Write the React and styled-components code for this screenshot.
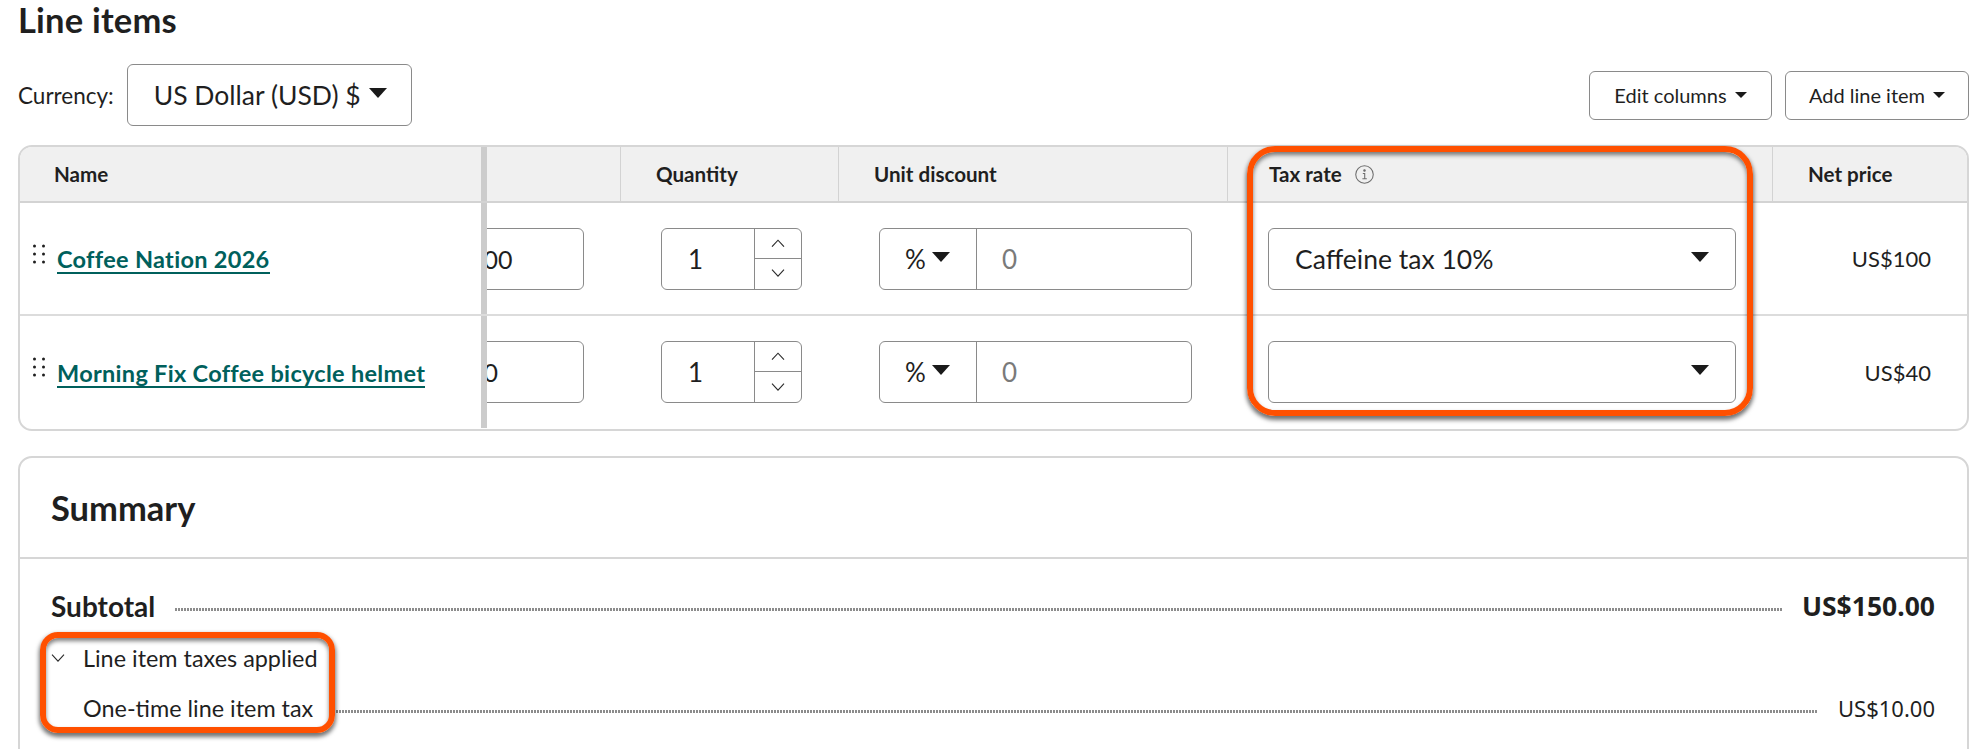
import React from "react"
import styled, { createGlobalStyle } from "styled-components"

const GlobalStyle = createGlobalStyle`
  * { box-sizing: border-box; }
  html, body { margin: 0; background: #fff; }
  body { font-family: "Lato", "Liberation Sans", sans-serif; color: #1f1f1f; }
`

const COLUMNS = "467px 133px 218px 389px 545px 195px"

const Page = styled.div`
  width: 1980px;
  height: 749px;
  overflow: hidden;
  padding: 0 11px 0 18px;
  display: flex;
  flex-direction: column;
`
const Title = styled.h1`
  margin: 0 0 24px;
  height: 40px;
  font-size: 34.5px;
  line-height: 40px;
  font-weight: 700;
  letter-spacing: 0.2px;
`
const Toolbar = styled.div`
  display: flex;
  align-items: center;
  justify-content: space-between;
  height: 62px;
  margin-bottom: 19px;
`
const Group = styled.div`
  display: flex;
  align-items: center;
  gap: ${(p) => p.$gap}px;
`
const Label = styled.span`
  font-size: 22.5px;
`
const CurrencySelect = styled.div`
  width: 285px;
  height: 62px;
  border: 1.5px solid #8a8a8a;
  border-radius: 6px;
  padding-left: 26px;
  display: flex;
  align-items: center;
  gap: 8px;
  font-size: 26.5px;
`
const ActionButton = styled.div`
  width: ${(p) => p.$width}px;
  height: 49px;
  border: 1.5px solid #8a8a8a;
  border-radius: 6px;
  display: flex;
  align-items: center;
  justify-content: center;
  gap: 8px;
  font-size: 20px;
`
const Caret = styled.span`
  width: 0;
  height: 0;
  flex: none;
  border-left: ${(p) => p.$w / 2}px solid transparent;
  border-right: ${(p) => p.$w / 2}px solid transparent;
  border-top: ${(p) => p.$h}px solid #1a1a1a;
  margin-top: ${(p) => p.$up || 0}px;
`
const Table = styled.div`
  position: relative;
  height: 286px;
  border: 2px solid #d6d6d6;
  border-radius: 14px;
  flex: none;
`
const HeaderRow = styled.div`
  display: grid;
  grid-template-columns: ${COLUMNS};
  height: 56px;
  background: #f0f0f0;
  border-bottom: 2px solid #d3d3d3;
  border-radius: 12px 12px 0 0;
`
const HeaderCell = styled.div`
  display: flex;
  align-items: center;
  gap: 13px;
  padding-left: ${(p) => p.$pad}px;
  font-size: 20.6px;
  font-weight: 700;
  border-left: ${(p) => (p.$first ? "none" : "1.5px solid #d3d3d3")};
  border-right: ${(p) => (p.$frozen ? "6px solid #cccccc" : "none")};
`
const Row = styled.div`
  display: grid;
  grid-template-columns: ${COLUMNS};
  height: ${(p) => (p.$last ? 114 : 113)}px;
  border-bottom: 2px solid ${(p) => (p.$last ? "transparent" : "#dcdcdc")};
`
const NameCell = styled.div`
  display: flex;
  align-items: center;
  gap: 12px;
  padding-left: 13px;
  border-right: 6px solid #cccccc;
`
const ItemLink = styled.a`
  color: #00605c;
  font-size: 23.5px;
  font-weight: 700;
  letter-spacing: 0.3px;
  line-height: 26px;
  margin-top: 3px;
  border-bottom: 2px solid #00605c;
`
const PriceCell = styled.div`
  display: flex;
  align-items: center;
  justify-content: flex-end;
  padding-right: 36px;
  overflow: hidden;
`
const PriceInput = styled.div`
  flex: none;
  width: 143px;
  height: 62px;
  padding-left: 27px;
  border: 1.5px solid #8a8a8a;
  border-radius: 6px;
  display: flex;
  align-items: center;
  font-size: 25px;
`
const PadCell = styled.div`
  display: flex;
  align-items: center;
  padding-left: 41px;
`
const Stepper = styled.div`
  width: 141px;
  height: 62px;
  border: 1.5px solid #8a8a8a;
  border-radius: 6px;
  display: flex;
`
const StepValue = styled.div`
  width: 93px;
  padding-left: 26px;
  display: flex;
  align-items: center;
  font-size: 26px;
  border-right: 1.5px solid #8a8a8a;
`
const StepButtons = styled.div`
  flex: 1;
  display: grid;
  grid-template-rows: 1fr 1fr;
`
const StepButton = styled.div`
  display: flex;
  align-items: center;
  justify-content: center;
  border-bottom: ${(p) => (p.$top ? "1.5px solid #8a8a8a" : "none")};
`
const DiscountInput = styled.div`
  width: 313px;
  height: 62px;
  border: 1.5px solid #8a8a8a;
  border-radius: 6px;
  display: flex;
`
const UnitSelect = styled.div`
  width: 97px;
  padding-left: 25px;
  display: flex;
  align-items: center;
  gap: 6px;
  font-size: 26px;
  border-right: 1.5px solid #8a8a8a;
`
const Placeholder = styled.div`
  padding-left: 25px;
  display: flex;
  align-items: center;
  font-size: 26px;
  color: #7a7a7a;
`
const TaxSelect = styled.div`
  width: 468px;
  height: 62px;
  border: 1.5px solid #8a8a8a;
  border-radius: 6px;
  padding: 0 26px;
  display: flex;
  align-items: center;
  justify-content: space-between;
  font-size: 26.5px;
`
const NetCell = styled.div`
  display: flex;
  align-items: center;
  justify-content: flex-end;
  padding-right: 36px;
  font-size: 22px;
`
const Callout = styled.div`
  position: absolute;
  left: ${(p) => p.$left}px;
  top: ${(p) => p.$top}px;
  width: ${(p) => p.$width}px;
  height: ${(p) => p.$height}px;
  border: 6px solid #ff5000;
  border-radius: ${(p) => p.$radius}px;
  box-shadow: 0 3px 4px 1px rgba(0, 0, 0, 0.55), inset 0 3px 4px rgba(0, 0, 0, 0.5);
  pointer-events: none;
`
const Summary = styled.section`
  position: relative;
  flex: none;
  height: 320px;
  margin-top: 25px;
  border: 2px solid #d6d6d6;
  border-radius: 14px;
`
const SummaryHead = styled.div`
  height: 101px;
  padding-left: 31px;
  display: flex;
  align-items: center;
  border-bottom: 2px solid #d6d6d6;
  font-size: 34.5px;
  font-weight: 700;
`
const SummaryBody = styled.div`
  padding: 25px 32px 0 31px;
  display: flex;
  flex-direction: column;
`
const LineRow = styled.div`
  display: flex;
  align-items: center;
  gap: 20px;
  height: 44px;
  margin-bottom: ${(p) => p.$after || 0}px;
  padding-left: ${(p) => p.$indent || 0}px;
`
const RowLabel = styled.span`
  font-size: ${(p) => (p.$bold ? 28 : 23.4)}px;
  font-weight: ${(p) => (p.$bold ? 700 : 400)};
`
const Leader = styled.div`
  flex: 1;
  height: 3px;
  margin-top: 6px;
  background: repeating-linear-gradient(to right, #8c8c8c 0 2px, transparent 2px 3px);
`
const Amount = styled.span`
  font-family: "Noto Sans", "Liberation Sans", sans-serif;
  font-size: ${(p) => (p.$bold ? 26.5 : 22)}px;
  font-weight: ${(p) => (p.$bold ? 700 : 400)};
`

const Chevron = ({ up, size = 14 }) => (
  <svg width={size} height={size * 0.6} viewBox="0 0 14 8" fill="none" stroke="#2a2a2a" strokeWidth="1.1">
    <path d={up ? "M1 7.5 7 1l6 6.5" : "M1 .5 7 7l6-6.5"} />
  </svg>
)

const DragHandle = () => (
  <svg width="12" height="20" viewBox="0 0 12 20" fill="#1f1f1f" style={{ marginTop: -10 }}>
    {[2, 10, 18].map((y) => (
      <g key={y}>
        <circle cx="1.5" cy={y} r="1.5" />
        <circle cx="10.5" cy={y} r="1.5" />
      </g>
    ))}
  </svg>
)

const InfoIcon = () => (
  <svg width="19" height="19" viewBox="0 0 18 18" fill="none" stroke="#6d6d6d" strokeWidth="1">
    <circle cx="9" cy="9" r="8.3" />
    <path d="M7.4 8h1.8v5M7 13h4.2" />
    <circle cx="9" cy="5.2" r=".7" fill="#6d6d6d" />
  </svg>
)

const items = [
  { name: "Coffee Nation 2026", price: "100", tax: "Caffeine tax 10%", net: "US$100" },
  { name: "Morning Fix Coffee bicycle helmet", price: "40", tax: "", net: "US$40" },
]

const App = () => {
  return (
    <Page>
      <GlobalStyle />
      <Title>Line items</Title>
      <Toolbar>
        <Group $gap={13}>
          <Label>Currency:</Label>
          <CurrencySelect>
            US Dollar (USD) $
            <Caret $w={18} $h={10} $up={-4} />
          </CurrencySelect>
        </Group>
        <Group $gap={13}>
          <ActionButton $width={183}>
            Edit columns
            <Caret $w={12} $h={6} />
          </ActionButton>
          <ActionButton $width={184}>
            Add line item
            <Caret $w={12} $h={6} />
          </ActionButton>
        </Group>
      </Toolbar>

      <Table>
        <HeaderRow>
          <HeaderCell $first $frozen $pad={34}>Name</HeaderCell>
          <HeaderCell $first />
          <HeaderCell $pad={35}>Quantity</HeaderCell>
          <HeaderCell $pad={35}>Unit discount</HeaderCell>
          <HeaderCell $pad={41}>
            Tax rate
            <InfoIcon />
          </HeaderCell>
          <HeaderCell $pad={35}>Net price</HeaderCell>
        </HeaderRow>
        {items.map((item, i) => (
          <Row key={item.name} $last={i === items.length - 1}>
            <NameCell>
              <DragHandle />
              <ItemLink>{item.name}</ItemLink>
            </NameCell>
            <PriceCell>
              <PriceInput>{item.price}</PriceInput>
            </PriceCell>
            <PadCell>
              <Stepper>
                <StepValue>1</StepValue>
                <StepButtons>
                  <StepButton $top>
                    <Chevron up />
                  </StepButton>
                  <StepButton>
                    <Chevron />
                  </StepButton>
                </StepButtons>
              </Stepper>
            </PadCell>
            <PadCell>
              <DiscountInput>
                <UnitSelect>
                  %
                  <Caret $w={18} $h={10} $up={-4} />
                </UnitSelect>
                <Placeholder>0</Placeholder>
              </DiscountInput>
            </PadCell>
            <PadCell>
              <TaxSelect>
                <span>{item.tax}</span>
                <Caret $w={18} $h={10} $up={-4} />
              </TaxSelect>
            </PadCell>
            <NetCell>{item.net}</NetCell>
          </Row>
        ))}
        <Callout $left={1227} $top={-1} $width={506} $height={270} $radius={28} />
      </Table>

      <Summary>
        <SummaryHead>Summary</SummaryHead>
        <SummaryBody>
          <LineRow $after={8}>
            <RowLabel $bold>Subtotal</RowLabel>
            <Leader />
            <Amount $bold>US$150.00</Amount>
          </LineRow>
          <LineRow $after={6}>
            <Chevron />
            <RowLabel style={{ marginLeft: -2 }}>Line item taxes applied</RowLabel>
          </LineRow>
          <LineRow $indent={32}>
            <RowLabel>One-time line item tax</RowLabel>
            <Leader />
            <Amount>US$10.00</Amount>
          </LineRow>
        </SummaryBody>
        <Callout $left={20} $top={174} $width={295} $height={101} $radius={18} />
      </Summary>
    </Page>
  )
}

export default App
